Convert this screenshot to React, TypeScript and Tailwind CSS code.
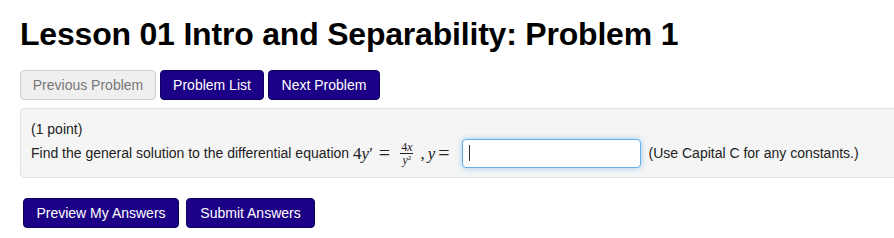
export default function App() {
  return (
    <div className="w-[894px] h-[238px] overflow-hidden bg-white font-['Liberation_Sans',Arial,sans-serif] text-[#222]">
      <h1 className="pl-[20px] pt-[14px] text-[32px] leading-[40px] font-bold text-black tracking-[-0.2px]">
        Lesson 01 Intro and Separability: Problem 1
      </h1>
      <div className="flex gap-[4px] pl-[20px] mt-[16px]">
        <button className="h-[30px] w-[136px] rounded-[4px] border border-[#cfcfcf] bg-[#efefef] text-[14px] text-[#777]">
          Previous Problem
        </button>
        <button className="h-[30px] w-[104px] rounded-[4px] border border-[#0e0060] bg-[#1c0086] text-[14px] text-white">
          Problem List
        </button>
        <button className="h-[30px] w-[112px] rounded-[4px] border border-[#0e0060] bg-[#1c0086] text-[14px] text-white">
          Next Problem
        </button>
      </div>
      <div className="ml-[20px] mt-[8px] w-[900px] h-[70px] rounded-l-[4px] border border-[#e3e3e3] bg-[#f5f5f5] pl-[10px] pt-[12px] text-[14px] text-[#222]">
        <div className="leading-[16px]">(1 point)</div>
        <div className="flex items-center h-[30px] mt-[1px]">
          <span>Find the general solution to the differential equation</span>
          <span className="ml-[4px] flex items-center font-['Liberation_Serif','Times_New_Roman',serif] text-[17px] leading-none">
            <span>4<i>y</i>′</span>
            <span className="ml-[6px] text-[20px]">=</span>
            <span className="ml-[10px] inline-flex flex-col items-center text-[12px] leading-[12px]">
              <span className="px-[1px] border-b border-[#222]">4<i>x</i></span>
              <span><i>y</i><sup className="text-[7px]">2</sup></span>
            </span>
            <span className="ml-[7px]">,</span>
            <i className="ml-[3px]">y</i>
            <span className="ml-[3px] text-[20px]">=</span>
          </span>
          <div className="ml-[12px] h-[29px] w-[179px] rounded-[4px] border border-[#66afe9] bg-white shadow-[0_0_6px_rgba(102,175,233,0.6)] flex items-center pl-[6px]">
            <div className="w-px h-[16px] bg-[#333]" />
          </div>
          <span className="ml-[8px]">(Use Capital C for any constants.)</span>
        </div>
      </div>
      <div className="flex gap-[7px] pl-[23px] mt-[20px]">
        <button className="h-[30px] w-[156px] rounded-[4px] border border-[#0e0060] bg-[#1c0086] text-[14px] text-white">
          Preview My Answers
        </button>
        <button className="h-[30px] w-[129px] rounded-[4px] border border-[#0e0060] bg-[#1c0086] text-[14px] text-white">
          Submit Answers
        </button>
      </div>
    </div>
  );
}
